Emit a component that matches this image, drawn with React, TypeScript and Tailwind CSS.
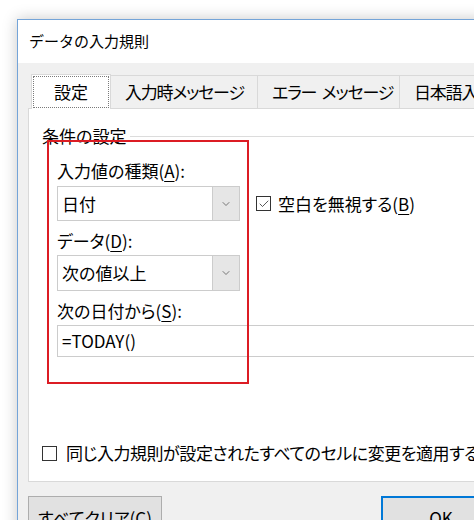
import { Check, ChevronDown } from 'lucide-react'

const tabs = [
  { label: '設定', width: 'w-[80px]' },
  { label: '入力時メッセージ', width: 'w-[147px]' },
  { label: 'エラー メッセージ', width: 'w-[142px]' },
  { label: '日本語入力', width: 'w-[140px]' },
]

function Mnemonic({ text, keyChar }: { text: string; keyChar: string }) {
  return (
    <span>
      {text}(<span className="underline underline-offset-[3px]">{keyChar}</span>)
    </span>
  )
}

function Checkbox({ checked }: { checked?: boolean }) {
  return (
    <span className="flex h-[15px] w-[15px] shrink-0 items-center justify-center border border-[#333333] bg-white">
      {checked && <Check className="h-[12px] w-[12px] text-[#222222]" strokeWidth={1.5} />}
    </span>
  )
}

function Select({ value }: { value: string }) {
  return (
    <div className="flex w-[183px] border border-[#cccccc] bg-white">
      <div className="flex flex-1 items-center pl-[4px]">{value}</div>
      <div className="flex w-[27px] items-center justify-center border-l border-[#cccccc] bg-[#e6e6e6]">
        <ChevronDown className="h-[12px] w-[12px] text-[#505050]" strokeWidth={1.5} />
      </div>
    </div>
  )
}

export default function App() {
  return (
    <div className="relative h-[520px] w-[474px] overflow-hidden bg-white pl-[17px] pt-[19px] font-['Noto_Sans_CJK_JP','Noto_Sans',sans-serif] text-[17px] text-black [font-feature-settings:'palt']">
      <div className="w-[540px] border border-[#74a4d8] bg-[#f0f0f0] shadow-[0_0_14px_rgba(0,0,0,0.22)]">
        {/* title bar */}
        <div className="flex h-[43px] items-center bg-white pl-[11px] text-[15px] [font-feature-settings:normal]">
          データの入力規則
        </div>

        <div className="pl-[10px] pt-[11px]">
          {/* tabs */}
          <div className="flex items-end pl-[3px]">
            {tabs.map((tab, i) =>
              i === 0 ? (
                <div
                  key={tab.label}
                  className={`relative z-10 -mb-px flex h-[35px] items-center justify-center border border-b-0 border-[#d9d9d9] bg-white ${tab.width}`}
                >
                  <span className="absolute inset-[1px] border border-dotted border-[#7a7a7a]" />
                  {tab.label}
                </div>
              ) : (
                <div
                  key={tab.label}
                  className={`flex h-[33px] shrink-0 items-center whitespace-pre border border-b-0 border-l-0 border-[#d9d9d9] bg-[#f0f0f0] pl-[14px] tracking-[-1.2px] [word-spacing:3px] ${tab.width}`}
                >
                  {tab.label}
                </div>
              )
            )}
          </div>

          {/* panel */}
          <div className="flex h-[374px] flex-col border border-[#d9d9d9] bg-white pl-[13px] pb-[16px]">
            <div className="mt-[15px] flex h-[24px] items-center">
              <span>条件の設定</span>
              <span className="ml-[4px] h-px flex-1 bg-[#dcdcdc]" />
            </div>

            <div className="pl-[15px]">
              <div className="mt-[11px] flex h-[24px] items-center">
                <Mnemonic text="入力値の種類" keyChar="A" />:
              </div>
              <div className="mt-[3px] flex h-[35px]">
                <Select value="日付" />
                <div className="ml-[16px] flex items-center gap-[7px]">
                  <Checkbox checked />
                  <Mnemonic text="空白を無視する" keyChar="B" />
                </div>
              </div>

              <div className="mt-[8px] flex h-[24px] items-center">
                <Mnemonic text="データ" keyChar="D" />:
              </div>
              <div className="mt-[2px] flex h-[36px]">
                <Select value="次の値以上" />
              </div>

              <div className="mt-[8px] flex h-[24px] items-center">
                <Mnemonic text="次の日付から" keyChar="S" />:
              </div>
              <div className="mt-[2px] flex h-[32px] w-[460px] items-center border border-[#cccccc] bg-white pl-[4px]">
                =TODAY()
              </div>
            </div>

            <div className="mt-auto flex h-[24px] items-center gap-[9px]">
              <Checkbox />
              <span className="whitespace-nowrap tracking-[-0.45px]">同じ入力規則が設定されたすべてのセルに変更を適用する</span>
            </div>
          </div>

          {/* buttons */}
          <div className="mt-[14px] flex pb-[10px]">
            <div className="flex h-[44px] w-[134px] items-center justify-center border border-[#adadad] bg-[#e1e1e1]">
              すべてクリア(C)
            </div>
            <div className="ml-[219px] flex h-[44px] w-[120px] items-center justify-center border-2 border-[#0078d7] bg-[#e1e1e1]">
              OK
            </div>
          </div>
        </div>
      </div>

      {/* red highlight annotation */}
      <div className="pointer-events-none absolute left-[47px] top-[140px] h-[244px] w-[202px] border-2 border-[#dc1c24]" />
    </div>
  )
}
